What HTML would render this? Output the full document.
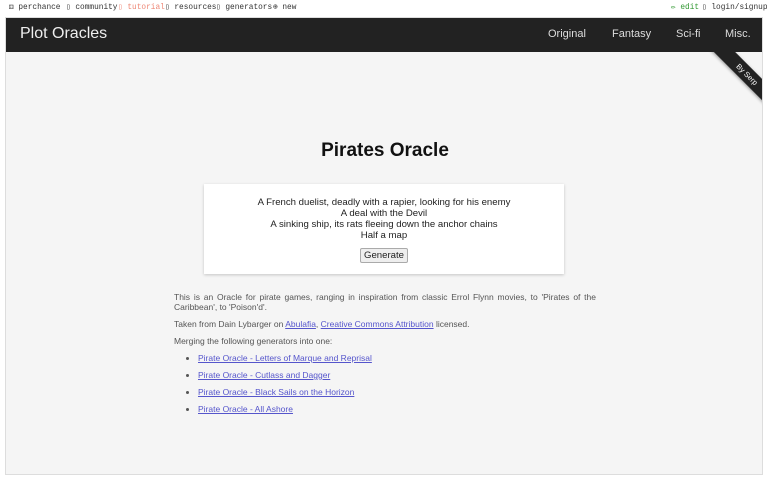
<!DOCTYPE html>
<html><head><meta charset="utf-8"><style>
*{margin:0;padding:0;box-sizing:border-box}
body{width:768px;height:480px;background:#fff;font-family:"Liberation Sans",sans-serif;position:relative;overflow:hidden}
.top{position:absolute;top:0;left:0;right:0;height:17px;font-family:"Liberation Mono",monospace;font-size:7.8px;color:#333;line-height:17px}
.top span{position:absolute;top:0}
.frame{position:absolute;left:5px;top:17px;width:758px;height:458px;background:#f5f5f5;border:1px solid #ddd;overflow:hidden}
.nav{position:absolute;left:0;top:0;width:758px;height:34px;background:#222;color:#eee;z-index:2}
.nav .brand{position:absolute;left:14px;top:7px;font-size:16px;color:#eee}
.nav a{position:absolute;top:10px;font-size:11px;color:#ddd}
.ribbon{position:absolute;left:686px;top:49px;width:110px;height:15px;background:#222;transform:rotate(45deg);color:#fff;font-size:7.5px;text-align:center;line-height:15px;box-shadow:0 1px 3px rgba(0,0,0,.4);z-index:1}
h1{position:absolute;left:0;width:758px;top:122px;text-align:center;font-size:19px;color:#111}
.card{position:absolute;left:198px;top:166px;width:360px;height:90px;background:#fff;box-shadow:0 1px 3px rgba(0,0,0,.2);text-align:center;font-size:9.6px;line-height:11px;color:#222;padding-top:13px}
.btn{display:inline-block;margin-top:7px;border:1px solid #aaa;border-radius:2px;background:#eee;padding:1px 3px;font-size:9.6px;line-height:11px}
.desc{position:absolute;left:168px;top:274px;width:422px;font-size:8.5px;color:#555;line-height:10px}
.desc p{margin-bottom:7px;text-align:justify}
.desc a{color:#55c;text-decoration:underline}
ul{margin-left:24px;list-style:disc}
li{margin-bottom:7px;padding-left:0}
</style></head><body>
<div class="top">
<span style="left:9px">⚃ perchance</span>
<span style="left:66px">▯ community</span>
<span style="left:118px;color:#e87">▯ tutorial</span>
<span style="left:165px">▯ resources</span>
<span style="left:216px">▯ generators</span>
<span style="left:273px">⊕ new</span>
<span style="left:671px;color:#393">✏ edit</span>
<span style="left:702px">▯ login/signup</span>
</div>
<div class="frame">
<div class="nav"><div class="brand">Plot Oracles</div>
<a style="left:542px">Original</a><a style="left:606px">Fantasy</a><a style="left:670px">Sci-fi</a><a style="left:719px">Misc.</a></div>
<div class="ribbon">By Serp</div>
<h1>Pirates Oracle</h1>
<div class="card">A French duelist, deadly with a rapier, looking for his enemy<br>A deal with the Devil<br>A sinking ship, its rats fleeing down the anchor chains<br>Half a map<br><span class="btn">Generate</span></div>
<div class="desc">
<p>This is an Oracle for pirate games, ranging in inspiration from classic Errol Flynn movies, to 'Pirates of the Caribbean', to 'Poison'd'.</p>
<p>Taken from Dain Lybarger on <a>Abulafia</a>, <a>Creative Commons Attribution</a> licensed.</p>
<p>Merging the following generators into one:</p>
<ul><li><a>Pirate Oracle - Letters of Marque and Reprisal</a></li><li><a>Pirate Oracle - Cutlass and Dagger</a></li><li><a>Pirate Oracle - Black Sails on the Horizon</a></li><li><a>Pirate Oracle - All Ashore</a></li></ul>
</div>
</div>
</body></html>
